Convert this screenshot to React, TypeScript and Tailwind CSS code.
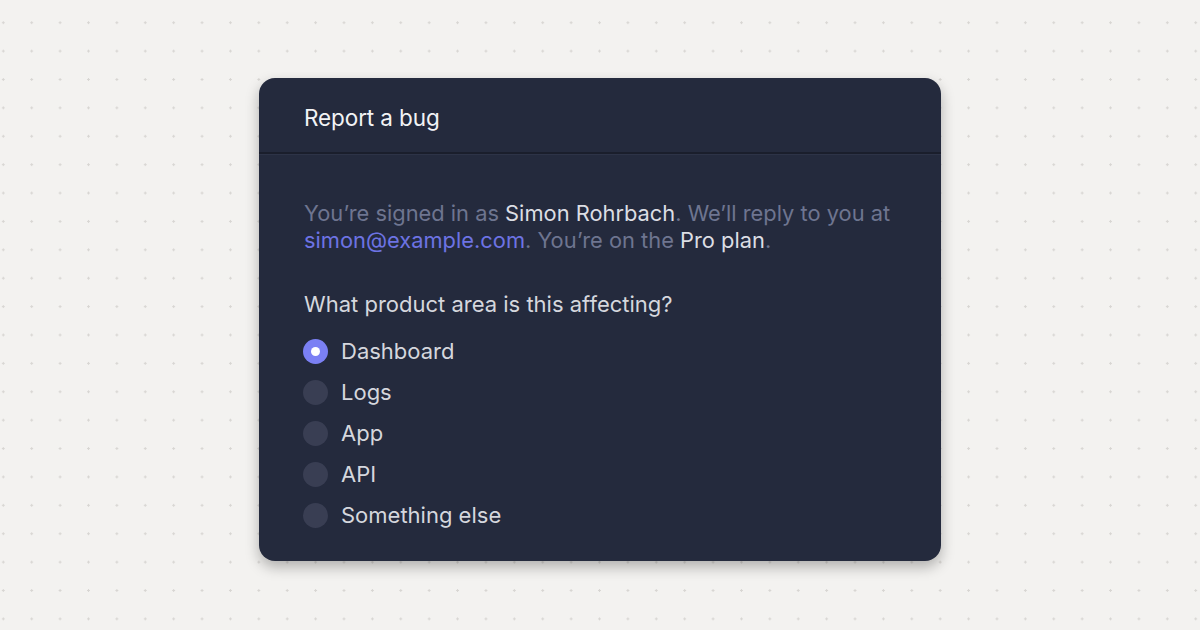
const areas = ["Dashboard", "Logs", "App", "API", "Something else"];

export default function App() {
  return (
    <div
      className="flex h-[630px] w-[1200px] items-start justify-center bg-[#f3f2f0] pt-[78px] font-['Inter',sans-serif]"
      style={{
        backgroundImage: "radial-gradient(circle, #d8d6d3 1.1px, transparent 1.4px)",
        backgroundSize: "28.4px 28.4px",
        backgroundPosition: "-10.9px 8.5px",
      }}
    >
      <div className="w-[682px] overflow-hidden rounded-[16px] bg-[#242a3d] shadow-[0_6px_14px_rgba(0,0,0,0.28)]">
        <div className="flex h-[76px] items-center border-b-2 border-[#1a1e2c] px-[45px] pt-[6px]">
          <h1 className="text-[22.5px] tracking-[-0.1px] text-[#f2f3f5]">Report a bug</h1>
        </div>
        <div className="border-t border-[#2d3347] px-[45px] pt-[45px] pb-[33px]">
          <p className="text-[21.85px] leading-[27px] text-[#6e7590]">
            You’re signed in as <span className="text-[#dcdee4]">Simon Rohrbach</span>. We’ll reply to you at{" "}
            <span className="text-[#6d73e3]">simon@example.com</span>. You’re on the{" "}
            <span className="text-[#dcdee4]">Pro plan</span>.
          </p>
          <p className="mt-[37px] text-[22px] leading-[27px] text-[#d5d7dd]">
            What product area is this affecting?
          </p>
          <div className="mt-[20px] flex flex-col gap-[15px]">
            {areas.map((a, i) => (
              <label key={a} className="flex h-[26px] items-center gap-[13px]">
                {i === 0 ? (
                  <span className="ml-[-1px] flex h-[25px] w-[25px] items-center justify-center rounded-full bg-[#7b80f4]">
                    <span className="h-[9px] w-[9px] rounded-full bg-white" />
                  </span>
                ) : (
                  <span className="ml-[-1px] h-[25px] w-[25px] rounded-full bg-[#393e53]" />
                )}
                <span className="text-[22px] text-[#d5d7dd]">{a}</span>
              </label>
            ))}
          </div>
        </div>
      </div>
    </div>
  );
}
